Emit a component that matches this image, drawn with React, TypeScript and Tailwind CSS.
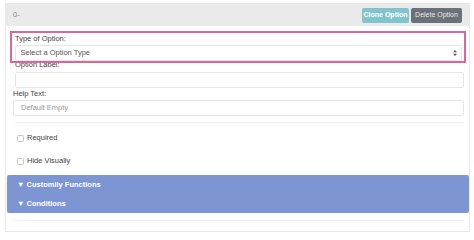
import React from "react";

export default function App() {
  const font = { fontFamily: '"Liberation Sans", Arial, sans-serif' };
  return (
    <div className="w-[474px] h-[236px] bg-white pt-[3px] pl-[5px] overflow-hidden" style={font}>
      <div className="w-[465px] h-[229px] border border-[#e8e8e8] flex flex-col">
        {/* header */}
        <div className="h-[22px] bg-[#eaeaea] flex items-center justify-between pl-[7px] pr-[7px] shrink-0">
          <span className="text-[7.5px] text-[#8a8a8a]">0-</span>
          <div className="flex items-center gap-[2px]">
            <button className="w-[47px] h-[15px] bg-[#82c4ce] text-white text-[7px] font-bold rounded-[2px] flex items-center justify-center">
              Clone Option
            </button>
            <button className="w-[51px] h-[15px] bg-[#6b7178] text-[#e6e6e6] text-[7px] rounded-[2px] flex items-center justify-center">
              Delete Option
            </button>
          </div>
        </div>

        {/* pink highlighted group */}
        <div className="relative z-10 bg-white ml-[4px] mt-[5px] w-[456px] h-[32px] border-2 border-[#d9689a] pl-[3px] pr-[2px] flex flex-col">
          <div className="text-[7.5px] leading-[10px] text-[#444] pt-[0.5px]">Type of Option:</div>
          <div className="mt-[1.5px] h-[16px] w-full border border-[#e6e6e6] rounded-[2px] flex items-center justify-between pl-[4.5px] pr-[4px]">
            <span className="text-[7.5px] text-[#555]">Select a Option Type</span>
            <svg width="4" height="6" viewBox="0 0 4 6">
              <polygon points="2,0 4,2.3 0,2.3" fill="#555" />
              <polygon points="2,6 4,3.7 0,3.7" fill="#555" />
            </svg>
          </div>
        </div>

        <div className="ml-[9px] mt-[-3.5px] text-[7.5px] leading-[9px] text-[#444]">Option Label:</div>
        <div className="ml-[9px] mt-[3.5px] w-[449px] h-[16px] border border-[#e6e6e6] rounded-[2px]"></div>

        <div className="ml-[7px] mt-[1px] text-[7.5px] leading-[9px] text-[#444]">Help Text:</div>
        <div className="ml-[7px] mt-[2px] w-[451px] h-[16px] border border-[#e6e6e6] rounded-[2px] flex items-center pl-[7px]">
          <span className="text-[7.5px] text-[#999]">Default Empty</span>
        </div>

        <div className="ml-[9px] mt-[6px] w-[449px] border-t border-[#f0f0f0]"></div>

        <div className="ml-[11px] mt-[11px] flex items-center gap-[3px] h-[8px]">
          <span className="w-[7px] h-[7px] border border-[#c4c4c4] rounded-[1.5px] bg-white"></span>
          <span className="text-[7.5px] text-[#444]">Required</span>
        </div>
        <div className="ml-[11px] mt-[15px] flex items-center gap-[3px] h-[8px]">
          <span className="w-[7px] h-[7px] border border-[#c4c4c4] rounded-[1.5px] bg-white"></span>
          <span className="text-[7.5px] text-[#444]">Hide Visually</span>
        </div>

        {/* blue section */}
        <div className="ml-[1px] mt-[10px] w-[462px] h-[38px] bg-[#7d95d3] rounded-[2px] flex flex-col pl-[10px] pt-[5px]">
          <div className="h-[10px] flex items-center text-white text-[7.5px] font-bold">▼ Customily Functions</div>
          <div className="mt-[9px] h-[10px] flex items-center text-white text-[7.5px] font-bold">▼ Conditions</div>
        </div>

        <div className="ml-[9px] mt-[7px] w-[449px] border-t border-[#f0f0f0]"></div>
      </div>
    </div>
  );
}
